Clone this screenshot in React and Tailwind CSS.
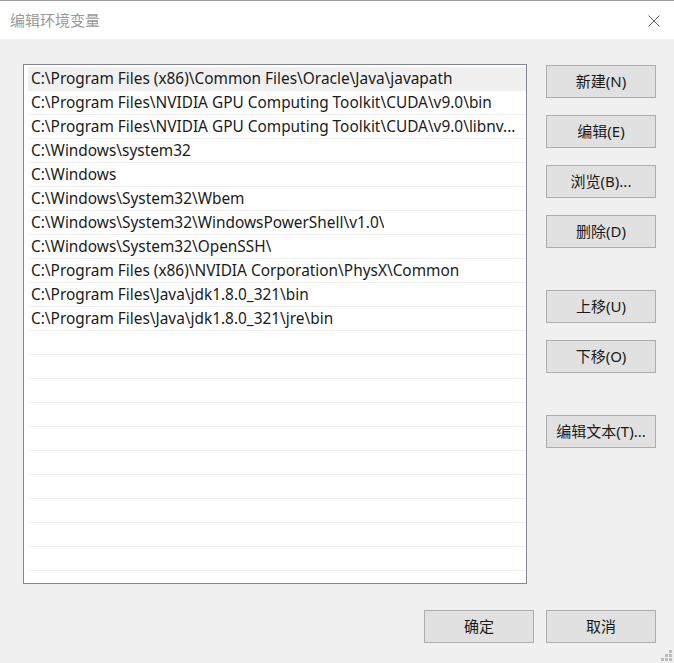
import React from "react"

const font = { fontFamily: '"Noto Sans", "Noto Sans CJK SC", sans-serif' }

const paths = [
  "C:\\Program Files (x86)\\Common Files\\Oracle\\Java\\javapath",
  "C:\\Program Files\\NVIDIA GPU Computing Toolkit\\CUDA\\v9.0\\bin",
  "C:\\Program Files\\NVIDIA GPU Computing Toolkit\\CUDA\\v9.0\\libnv...",
  "C:\\Windows\\system32",
  "C:\\Windows",
  "C:\\Windows\\System32\\Wbem",
  "C:\\Windows\\System32\\WindowsPowerShell\\v1.0\\",
  "C:\\Windows\\System32\\OpenSSH\\",
  "C:\\Program Files (x86)\\NVIDIA Corporation\\PhysX\\Common",
  "C:\\Program Files\\Java\\jdk1.8.0_321\\bin",
  "C:\\Program Files\\Java\\jdk1.8.0_321\\jre\\bin",
]

function Btn({ children, className = "" }) {
  return (
    <button
      className={`h-[33px] w-[110px] border border-[#adadad] bg-[#e1e1e1] text-[15px] text-[#1a1a1a] flex items-center justify-center ${className}`}
    >
      {children}
    </button>
  )
}

export default function App() {
  const rows = [...paths, ...Array(11).fill("")]

  return (
    <div className="w-[674px] h-[663px] bg-[#f0f0f0] flex flex-col relative overflow-hidden" style={font}>
      {/* title bar */}
      <div className="h-[39px] bg-white border-t border-[#9a9a9a] flex items-center justify-between pl-[10px] pr-[14px]">
        <span className="text-[15px] text-[#999999]">编辑环境变量</span>
        <svg width="12" height="12" viewBox="0 0 12 12" className="mt-[1px]">
          <path d="M0.5 0.5 L11.5 11.5 M11.5 0.5 L0.5 11.5" stroke="#6b6b6b" strokeWidth="1" fill="none" />
        </svg>
      </div>

      <div className="flex pt-[25px] pl-[23px]">
        {/* list */}
        <div className="w-[504px] h-[520px] bg-white border border-[#828790] pt-[2px] pl-[4px] overflow-hidden">
          {rows.map((p, i) => (
            <div
              key={i}
              className={`h-[24px] border-b border-[#f0f0f0] flex items-center pl-[3px] pr-[3px] ${i === 0 ? "bg-[#f0f0f0]" : ""}`}
            >
              <span className="whitespace-nowrap overflow-hidden text-[15.4px] text-[#1a1a1a] leading-[21px]">{p}</span>
            </div>
          ))}
        </div>

        {/* side buttons */}
        <div className="ml-[19px] mt-[1px] flex flex-col">
          <Btn>新建(N)</Btn>
          <Btn className="mt-[17px]">编辑(E)</Btn>
          <Btn className="mt-[17px]">浏览(B)...</Btn>
          <Btn className="mt-[17px]">删除(D)</Btn>
          <Btn className="mt-[42px]">上移(U)</Btn>
          <Btn className="mt-[17px]">下移(O)</Btn>
          <Btn className="mt-[42px]">编辑文本(T)...</Btn>
        </div>
      </div>

      {/* bottom buttons */}
      <div className="flex justify-end gap-[12px] pr-[18px] mt-[26px]">
        <Btn>确定</Btn>
        <Btn>取消</Btn>
      </div>

      {/* resize grip */}
      <svg width="12" height="12" viewBox="0 0 12 12" className="absolute right-[1px] bottom-[1px]">
        <g fill="#bcbcbc">
          <rect x="8" y="0" width="3" height="3" />
          <rect x="4" y="4" width="3" height="3" />
          <rect x="8" y="4" width="3" height="3" />
          <rect x="0" y="8" width="3" height="3" />
          <rect x="4" y="8" width="3" height="3" />
          <rect x="8" y="8" width="3" height="3" />
        </g>
      </svg>
    </div>
  )
}
